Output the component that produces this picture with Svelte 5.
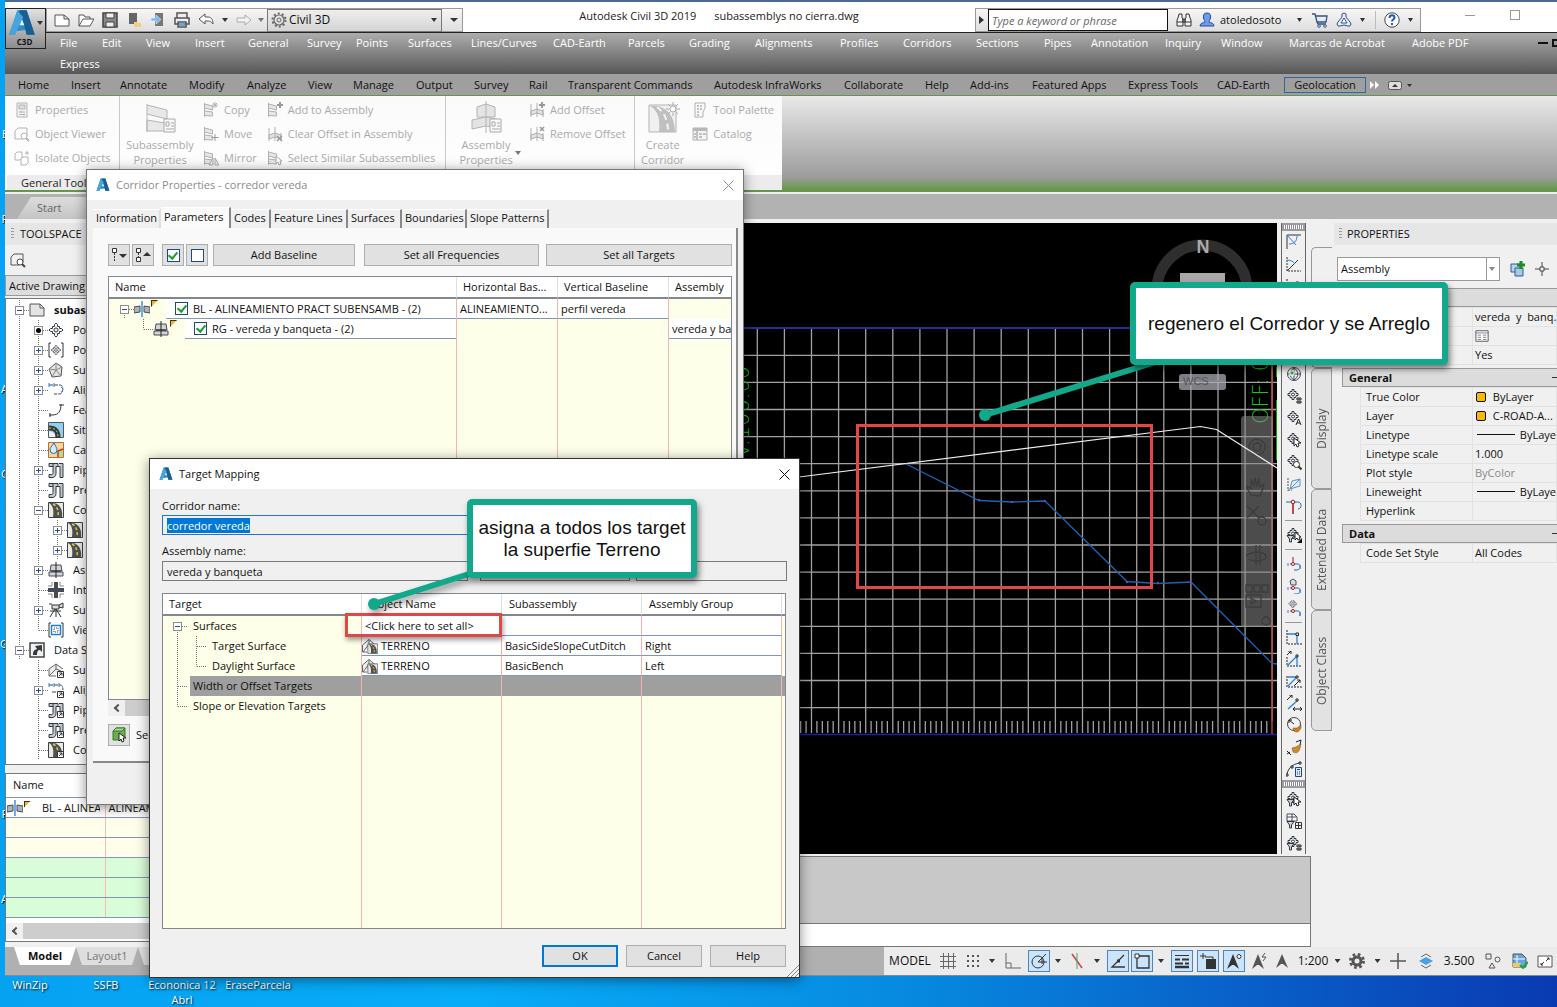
<script lang="ts">
  import { onMount } from 'svelte'

  type Guide = 'line' | 'tee' | 'end' | 'plus' | 'minus' | 'dot' | 'top' | 'blank'

  interface TreeRow {
    guides: Guide[]
    icon: string
    label?: string
    bold?: boolean
  }

  interface StatusItem {
    w: number
    icon?: string
    text?: string
    drop?: boolean
    on?: boolean
    title?: string
  }

  let corridorInput: HTMLInputElement

  onMount(() => {
    corridorInput.focus()
    corridorInput.select()
  })

  const menus: [string, number][] = [
    ['File', 42], ['Edit', 44], ['View', 49], ['Insert', 53], ['General', 59], ['Survey', 49],
    ['Points', 52], ['Surfaces', 63], ['Lines/Curves', 82], ['CAD-Earth', 75], ['Parcels', 61],
    ['Grading', 66], ['Alignments', 85], ['Profiles', 63], ['Corridors', 73], ['Sections', 68],
    ['Pipes', 47], ['Annotation', 74], ['Inquiry', 56], ['Window', 68],
    ['Marcas de Acrobat', 123], ['Adobe PDF', 90],
  ]

  const ribbonTabs: [string, number][] = [
    ['Home', 53], ['Insert', 49], ['Annotate', 69], ['Modify', 58], ['Analyze', 61], ['View', 45],
    ['Manage', 63], ['Output', 58], ['Survey', 55], ['Rail', 39], ['Transparent Commands', 146],
    ['Autodesk InfraWorks', 130], ['Collaborate', 81], ['Help', 45], ['Add-ins', 62],
    ['Featured Apps', 96], ['Express Tools', 89], ['CAD-Earth', 67],
  ]

  const point = '<path d="M6.5 4.5v-2L8 1l1.5 1.5v2h2v2h2L15 8l-1.5 1.5h-2v2h-2v2L8 15l-1.5-1.5v-2h-2v-2h-2L1 8l1.5-1.5h2v-2z" fill="#f4f4f4" stroke="#333944"/><circle cx="8" cy="8" r="2" fill="none" stroke="#333944"/>'
  const smallPoint = '<path d="M6 3.5v-2h2v2h2v2h2v2h-2v2h-2v2h-2v-2h-2v-2h-2v-2h2v-2z" fill="#f6f6f6" stroke="#333944"/><circle cx="7" cy="6.5" r="1.5" fill="none" stroke="#333944"/>'
  const road = '<path d="M.5.5h15v15H.5z" fill="#eceae0" stroke="#39424c"/><path d="M1 1c4 2 5 7 4 14h9C15 8 12 2 6 1z" fill="#4d5156"/><path d="M5 2c4 2 6 7 5 13" fill="none" stroke="#f0c830" stroke-width="1.5" stroke-dasharray="3 2"/>'
  const pipe = '<path d="M1 1.5h9v3H8v7c0 3-2 4-4 4H1v-3h2c1 0 2 0 2-2v-6H1zM11 1.5h4v14h-3v-11" fill="#c2c7cd" stroke="#32383f"/><path d="M5 1v4M10 4.5h2" stroke="#32383f"/>'
  const ref = '<path d="M9.5 9.5h6v6h-6z" fill="#fff" stroke="#333"/><path d="M11 14l3-3M11.5 11H14v2.5" fill="none" stroke="#333"/>'
  const align = '<path d="M1 3h11c4 0 4 9-1 9H6" fill="none" stroke="#3b4652" stroke-dasharray="4 1"/><path d="M1 1v4M6 1v4M13 5l2 2M13 10l2-1" stroke="#2b80d8"/>'
  const align2 = '<path d="M4 8h2m3 0h3c3 0 3 6-1 6H8" fill="none" stroke="#2468b0"/><path d="M14 9v4M2 7v3" stroke="#2b80d8"/><circle cx="7" cy="8" r="1.5" fill="#fff" stroke="#b01010"/>'
  const ribbonSub = '<path d="M1.5 1v14M1.5 2l8 2v4l-8-2M1.5 9l8 1v4l-8-.5" fill="#e6e6e6" stroke="#b0b0b0"/>'
  const offset = '<path d="M2 2v13M8 1v14M14 7v8M2 9l6-2 6 2v4l-6-2-6 2z" fill="#e2e2e2" stroke="#b0b0b0"/>'
  const filter = '<path d="M1 8.5h7L5.5 12v3h-2v-3z" fill="#ccd1d7" stroke="#333944"/>'
  const hash = '<path d="M10 11h6M10 14h6M12 9v7M14 9v7" stroke="#222"/>'
  const cursor = '<path d="M8 6v8l2-2 1 3 2-1-1-3h3z" fill="#fff" stroke="#222"/>'
  const ghostCursor = '<path d="M9 6v8l2-2 1 3 2-1-1-3h2z" fill="#fff" stroke="#a8a8a8"/>'

  const icons: Record<string, string> = {
    newFile: '<path d="M1 3h9l5 4v7H1zM10 3v4h5" fill="#fff" stroke="#555"/>',
    open: '<path d="M1 14V3h5l1 2h5v2M1 14l4-7h11l-4 7z" fill="#fff" stroke="#555"/>',
    save: '<path d="M1 1h14v14H1z" fill="#888" stroke="#444" stroke-width="1.5"/><path d="M4 1h8v5H4zM4 10h8v5H4z" fill="#eee" stroke="#444"/>',
    sheet: '<path d="M3 1h8v11H3z" fill="#666"/><path d="M8 10h4l1 1h2v4H8z" fill="#f5cf80"/>',
    export: '<path d="M5 1h8v13H5z" fill="#777"/><path d="M1 6h5V3l5 4.5L6 12V9H1z" fill="#78b9ef" stroke="#fff" stroke-width=".5"/>',
    print: '<path d="M3 1h10v5H3zM1 6h14v6H1zM4 10h8v5H4z" fill="#eee" stroke="#555" stroke-width="1.5"/><path d="M5 11h6v3H5z" fill="#62a7df"/>',
    undo: '<path d="M1 7l6-5v3h3c4 0 5 4 5 7-2-3-4-3-5-3H7v3z" fill="#fff" stroke="#555"/>',
    redo: '<path d="M15 8L9 3v3H1v4h8v3z" fill="#f4f4f4" stroke="#aaa"/>',
    gear: '<circle cx="8" cy="8" r="5" fill="none" stroke="#666" stroke-width="1.2"/><circle cx="8" cy="8" r="2" fill="none" stroke="#666"/><circle cx="8" cy="8" r="6.5" fill="none" stroke="#666" stroke-width="2" stroke-dasharray="2 2.08"/>',
    binoculars: '<path d="M2 6l1-4h3v4l1 1v7H1V8zM14 6l-1-4h-3v4L9 7v7h6V8zM7 7h2v3H7zM1 10h6M9 10h6" fill="#f4f4f4" stroke="#333"/>',
    user: '<path d="M8 1c-3 0-4 2-3.5 5C5 8 6 9 6 10c-2 1-5 1-5 4h14c0-3-3-3-5-4 0-1 1-2 1.5-4C12 3 11 1 8 1z" fill="#6c9cf0" stroke="#2a4a90"/>',
    cart: '<path d="M0 2h3l2 8h9l1-6H4M5 10l1 2h8" fill="none" stroke="#34518a" stroke-width="1.3"/><circle cx="7" cy="14" r="1.3" fill="#fff" stroke="#34518a"/><circle cx="13" cy="14" r="1.3" fill="#fff" stroke="#34518a"/>',
    app360: '<path d="M6 2l2-1 2 1v3l4 5 1 2-1 2h-2l-4-1-4 1H2l-1-2 1-2 4-5z" fill="#e8edf5" stroke="#34518a"/><path d="M8 6l3 5H5z" fill="#fff" stroke="#34518a"/>',
    help: '<circle cx="8" cy="8" r="7.2" fill="#fff" stroke="#444"/><path d="M5.5 6c0-4 5-3.5 5-.5 0 2-2.5 2-2.5 4M8 11v2" fill="none" stroke="#2558b0" stroke-width="2"/>',
    props: '<path d="M3 1h10v14H3z" fill="#f4f4f4" stroke="#b4b4b4"/><path d="M5 3h6v4H5z" fill="#ddd" stroke="#b4b4b4"/><path d="M5 10h6M5 12.5h6M7 9v2M10 11.5v2" stroke="#b4b4b4"/>',
    viewer: '<path d="M1 5l3-3h9v8M1 5v8h8" fill="none" stroke="#b4b4b4"/><circle cx="10" cy="10" r="3" fill="#fff" stroke="#b4b4b4"/><path d="M12 12l3 3" stroke="#b4b4b4" stroke-width="2"/>',
    viewerDark: '<path d="M1 5l3-3h9v8M1 5v8h8" fill="none" stroke="#555"/><circle cx="10" cy="10" r="3" fill="#fff" stroke="#444"/><path d="M12 12l3 3" stroke="#444" stroke-width="2"/>',
    isolate: '<path d="M1 4l2-2h5v6l-2 2H1zM7 9l2-2h5v6l-2 2H7zM13 1v4M11 3h4" fill="none" stroke="#b4b4b4"/>',
    copy: ribbonSub + '<path d="M12 0v6M9 3h6M10 1l4 4M14 1l-4 4" stroke="#b4b4b4"/>',
    move: ribbonSub + '<path d="M12 8v7M8.5 11.5h7" stroke="#999"/>',
    mirror: ribbonSub + '<path d="M10 8v7H6zM12 8v7h4z" fill="#eee" stroke="#aaa"/>',
    addAsm: ribbonSub + '<path d="M13 0v6M10 3h6" stroke="#999" stroke-width="2"/>',
    clearAsm: offset + '<path d="M10 10l5 5M15 10l-5 5" stroke="#999" stroke-width="1.5"/>',
    similar: ribbonSub + ghostCursor,
    addOffset: offset + '<path d="M13 0v6M10 3h6" stroke="#999" stroke-width="2"/>',
    removeOffset: offset + '<path d="M11 1l4 4M15 1l-4 4" stroke="#999" stroke-width="1.5"/>',
    palette: '<path d="M3 1h10v5l-2 4v5H3z" fill="#f8f8f8" stroke="#b0b0b0"/><path d="M5 4h2M5 7h2M5 10h2M8 4h2M8 7h2M5 13h2" stroke="#b0b0b0" stroke-width="1.5"/>',
    catalog: '<path d="M1 2h14v12H1z" fill="#f4f4f4" stroke="#b0b0b0"/><path d="M1 2h14v3H1z" fill="#b8b8b8"/><path d="M5 5v9M7 8h3M7 11h3M11 8h3M2 8h2M2 11h2" stroke="#b0b0b0" stroke-width="1.5"/>',
    doc: '<path d="M1 2h10l4 4v8H1z" fill="#e4e4e4" stroke="#555"/><path d="M11 2v4h4z" fill="#fff" stroke="#555"/>',
    point,
    pointGroup: '<path d="M3 1H1v14h2M13 1h2v14h-2" fill="none" stroke="#333"/><g transform="translate(2.4 2.4) scale(.7)">' + point + '</g>',
    surface: '<path d="M8 1l6 4-1 9-9 1-3-8z" fill="#e3e3e3" stroke="#555"/><path d="M8 1v7l6-3M8 8l5 6M8 8l-4 7M8 8L1 7" fill="none" stroke="#888"/>',
    surfaceRef: '<path d="M1 14V7l7-5 7 5M1 14h7M8 2v5L1 14M8 7l5 2" fill="#eee" stroke="#666"/>' + ref,
    align,
    alignRef: '<path d="M1 3h11c2 0 3 2 3 5M4 10h4" fill="none" stroke="#3b4652" stroke-dasharray="4 1"/><path d="M1 1v4M6 1v4M11 1v4" stroke="#2b80d8"/>' + ref,
    feature: '<path d="M1 13h3c7 0 9-4 9-11M11 3h5M2 11v4" fill="none" stroke="#333"/>',
    site: '<path d="M.5.5h15v15H.5z" fill="#8fd0f5" stroke="#555"/><path d="M1 9l5 2 3 4H1z" fill="#eef"/><path d="M1 6c7 0 9 3 9 10" fill="none" stroke="#333a40" stroke-width="5"/><path d="M1 6c7 0 9 3 9 10" fill="none" stroke="#f0c830" stroke-dasharray="2 2"/>',
    catchment: '<path d="M.5.5h15v15H.5z" fill="#f6d8a0" stroke="#b07030"/><path d="M8 9c3-2 5 0 7-3v9H9z" fill="#b5dc90"/><path d="M10 9l5-2M10 9v6" stroke="#d83020" stroke-width="1.5"/><path d="M6 1c-3 4-4 5-4 7a3.5 3.5 0 007 0C9 6 8 5 6 1z" fill="#d5ecff" stroke="#2468b0"/>',
    pipe,
    pipeRef: pipe + ref,
    road,
    roadRef: road + ref,
    assembly: '<path d="M3 3h10l1 6H2zM1 10h14v4H1z" fill="#d2d4d8" stroke="#444a55"/><path d="M8 0v16M3 9h10" stroke="#222"/>',
    intersection: '<path d="M6 0v6H0v4h6v6h4v-6h6V6h-6V0z" fill="#454b52"/><path d="M4 0v4H0M12 0v4h4M4 16v-4H0M12 16v-4h4" fill="none" stroke="#888"/>',
    survey: '<path d="M4 3h7v4H4zM1 2h3M11 3l4-2v5l-4-1M7 7L2 15M8 7v8M8 7l5 8M2 9h11" fill="#ddd" stroke="#333"/>',
    viewFrame: '<path d="M3 1H1v14h2M13 1h2v14h-2" fill="none" stroke="#333"/><path d="M3.5 3.5h9v9h-9z" fill="#fff" stroke="#1c80e0" stroke-width="1.5"/><path d="M6 6h4v4H6z" fill="none" stroke="#444" stroke-dasharray="1 1"/>',
    shortcut: '<path d="M1 1h14v14H1z" fill="#f2f2f2" stroke="#444" stroke-width="1.5"/><path d="M4 13c0-4 1-5 4-6L6 4l7-1v7l-2-2c-2 0-3 1-3 5z" fill="#333b45"/>',
    baseline: '<path d="M0 6l6-1v6l-6 1zM10 5l6 1v6l-6-1z" fill="#aeb2b8" stroke="#444a55"/><path d="M8 0v16" stroke="#1c80e0" stroke-width="1.3"/>',
    target: '<path d="M.5 14V7L7 1.5 13.5 7M.5 14H5M7 1.5V6M1 14l6-8" fill="#eee" stroke="#666"/><g transform="translate(5.5 5.5) scale(.66)">' + road + '</g>',
    select: '<path d="M2 4l3-3h9v9l-3 3H2z" fill="#6cae4e" stroke="#37782a"/><path d="M2 4l3-3h9l-3 3z" fill="#b0dc98" stroke="#37782a"/>' + cursor,
    expand: '<path d="M1.5 1.5h4v4h-4z" fill="#fff" stroke="#333"/><path d="M3.5 6v9" stroke="#333" stroke-dasharray="2 1"/><path d="M8 7h8l-4 4z" fill="#333"/>',
    collapse: '<path d="M1.5 1.5h4v4h-4zM1.5 10.5h4v4h-4z" fill="#fff" stroke="#333"/><path d="M3.5 6v4" stroke="#333" stroke-dasharray="2 1"/><path d="M8 9h8l-4-4z" fill="#333"/>',
    tAngle: '<path d="M1 15V1h14" fill="none" stroke="#333"/><path d="M1 1l9 10M11 2c0 5-3 8-8 8" fill="none" stroke="#2b80d8"/>',
    tBearing: '<path d="M1 1v14h14" fill="none" stroke="#333" stroke-dasharray="2 1"/><path d="M1 15L12 4" stroke="#333"/><path d="M1 4c4 0 7 2 8 4" fill="none" stroke="#2b80d8"/>',
    tGlobe: '<circle cx="8" cy="8" r="6.5" fill="#eee" stroke="#444a55"/><path d="M8 1.5v13M2 8h12M8 2c5 3 5 9 0 12M8 2c-5 3-5 9 0 12" fill="none" stroke="#444a55"/><path d="M4 5h4v4H4z" fill="#2fae38" stroke="#fff"/>',
    tHash: smallPoint + hash,
    tA: smallPoint + '<path d="M10 15l2.5-6 2.5 6M11 13h3" fill="none" stroke="#222"/>',
    tPick: smallPoint + cursor,
    tZoom: smallPoint + '<circle cx="10.5" cy="10.5" r="3" fill="#fff" stroke="#333"/><path d="M12.5 12.5l3 3" stroke="#333" stroke-width="2"/>',
    tGrade: '<path d="M2 2v13M2 14h4" stroke="#555" stroke-dasharray="2 1"/><path d="M4 13l2-8 8-2v7zM4 13l10-10" fill="#dcecfb" stroke="#6a8fb5"/>',
    tStation: '<path d="M0 4h5M9 4h3c4 0 4 7 0 7" fill="none" stroke="#2468b0"/><path d="M7 5v11" stroke="#b01010" stroke-width="1.5"/><circle cx="7" cy="4" r="1.8" fill="#fff" stroke="#b01010"/>',
    tFilterPt: smallPoint + filter + '<path d="M9 5v8l2-2 1 2 2-1-1-2h2z" fill="#fff" stroke="#222"/><path d="M16 11v5h-5z" fill="#111"/>',
    tAlign: '<path d="M7 1v5" stroke="#b01010"/>' + align2,
    tAlignSurf: '<path d="M4 3l3-2 3 2v4H5z" fill="#ddd" stroke="#444a55"/><g transform="translate(0 2)">' + align2 + '</g>',
    tAlignPt: '<g transform="translate(2 -1) scale(.6)">' + point + '</g><g transform="translate(0 3)">' + align2 + '</g>',
    tRect: '<path d="M1 1v14h15" fill="none" stroke="#222" stroke-dasharray="2 1"/><path d="M1 5h10v10" fill="none" stroke="#2b80d8" stroke-width="1.3"/><path d="M10 4h2.5v2.5H10z" fill="#fff" stroke="#222"/>',
    tTri: '<path d="M1 6v9h15" fill="none" stroke="#222" stroke-dasharray="2 1"/><path d="M2 14l9-9v10" fill="none" stroke="#2b80d8" stroke-width="1.3"/><path d="M1 4l4-4M2 0h3v3" fill="none" stroke="#222"/><path d="M10 4h2v2h-2z" fill="#fff" stroke="#222"/>',
    tTri2: '<path d="M1 3v11h15" fill="none" stroke="#222" stroke-dasharray="2 1"/><path d="M2 13l9-9H2" fill="none" stroke="#2b80d8" stroke-width="1.3"/><path d="M8 13l6-6M11 7h3v3" fill="none" stroke="#222"/><path d="M10 3h2v2h-2z" fill="#fff" stroke="#222"/>',
    tPar: '<path d="M1 5l5-5M3 0h3v3M7 14h9M9 12l-2 2 2 2M14 12l2 2-2 2" fill="none" stroke="#222"/><path d="M2 14L12 5" stroke="#2b80d8" stroke-width="1.3"/><path d="M10 4h2v2h-2z" fill="#fff" stroke="#222"/>',
    tBrush: '<circle cx="8" cy="7" r="6.5" fill="#f2f2f2" stroke="#444"/><path d="M8 7L3 3M3 6V3h3" fill="none" stroke="#222"/><path d="M15 8l-4 3-4 0 1 3c3 2 5 1 7-3z" fill="#c8812c" stroke="#7a4a10" stroke-width=".5"/>',
    tBrush2: '<path d="M1 12l4 4M1 15l3-2M10 3l5-2-1 5" fill="none" stroke="#222"/><path d="M15 5l-5 3-4 1 1 4c4 2 6 0 7-4z" fill="#d08a2c" stroke="#7a4a10" stroke-width=".5"/>',
    tCalc: '<path d="M1 15C1 8 6 3 14 2" fill="none" stroke="#333"/><path d="M0 13h2v2H0zM5 5h2v2H5zM13 1h2v2h-2z" fill="#fff" stroke="#222"/><path d="M9.5 6.5h6v9h-6z" fill="#dce8f5" stroke="#1c4a80"/><path d="M11 8.5h3M11 11h1M13 11h1M11 13h1M13 13h1" stroke="#1c4a80"/>',
    tSelPt: smallPoint + filter + cursor,
    tSheet: '<path d="M1 1h7l3 3v4H1z" fill="#fff" stroke="#444a55"/><path d="M6 1v7M1 4h9" stroke="#444a55"/>' + filter + '<path d="M9.5 9.5h6v6h-6zM9 12.5h7M12.5 9v7" fill="none" stroke="#333"/>',
    tSelHash: smallPoint + filter + hash,
    quick: '<path d="M2 3h9v8H2z" fill="#b8d2ec" stroke="#2c5c94"/><path d="M6 7h8v8H6z" fill="#a8c8e8" stroke="#2c5c94"/><path d="M12 0v8M8 4h8" stroke="#1e8a28" stroke-width="3"/>',
    pick: '<path d="M8 1v5M8 10v5M1 8h5M10 8h5M6 6h4v4H6z" fill="none" stroke="#444"/>',
    table: '<path d="M1 2h14v12H1z" fill="#fff" stroke="#444a55"/><path d="M1 4.5h14M3 7h4M9 7h4M3 9.5h4M9 9.5h4M3 12h4M9 12h4" stroke="#777"/>',
    sGrid: '<path d="M3.5 0v16M8.5 0v16M13.5 0v16M0 3.5h16M0 8.5h16M0 13.5h16" stroke="#666"/>',
    sSnap: '<path d="M2 3h14M2 8h14M2 13h14" stroke="#555" stroke-width="2" stroke-dasharray="2 3"/>',
    sOrtho: '<path d="M1 0v15h15M1 10h5v5" fill="none" stroke="#666"/>',
    sPolar: '<circle cx="7" cy="9" r="6" fill="none" stroke="#333"/><path d="M15 1L7 9h9M11 5v6" fill="none" stroke="#333"/>',
    sIso: '<path d="M3 1l10 14" stroke="#d04040" stroke-width="1.5"/><path d="M8 0v16" stroke="#3fa860"/>',
    sTrack: '<path d="M14 2L2 14h13" fill="none" stroke="#333" stroke-width="1.3"/><path d="M7 8h3" stroke="#333" stroke-width="3"/>',
    sOsnap: '<path d="M5 3h10v12H3V5" fill="none" stroke="#333" stroke-width="1.3"/><path d="M1 1h4v4H1z" fill="#fff" stroke="#333"/>',
    sLwt: '<path d="M1 2.5h14" stroke="#333"/><path d="M1 6.5h5M8 6.5h7M1 10.5h8M11 10.5h4" stroke="#333" stroke-width="2"/><path d="M1 14h14" stroke="#333" stroke-width="2.5"/>',
    sCycle: '<path d="M6 6h10v10H6z" fill="#333"/><path d="M3 0v6M0 3h6M5 4h8v3" fill="none" stroke="#333"/>',
    sAnno: '<path d="M7 1l6 15-5-4H6l-5 4z" fill="#333"/><circle cx="13" cy="3.5" r="2" fill="#fff" stroke="#333"/>',
    sAuto: '<path d="M7 1l6 15-5-4H6l-5 4z" fill="#555"/><path d="M14 0l-3 4h4l-3 4" fill="none" stroke="#555"/>',
    sScale: '<path d="M8 1l6 14-5-4H7l-5 4z" fill="#555"/>',
    sGear: '<circle cx="8" cy="8" r="4" fill="none" stroke="#555" stroke-width="3"/><circle cx="8" cy="8" r="6.5" fill="none" stroke="#555" stroke-width="3" stroke-dasharray="2.6 2.505"/>',
    sPlus: '<path d="M8 0v16M0 8h16" stroke="#555" stroke-width="1.5"/>',
    sElev: '<path d="M3 4l5-3 5 3M3 12l5 3 5-3" fill="none" stroke="#666"/><path d="M8 4l7 4-7 4-7-4z" fill="#4d9fe0"/>',
    sIsolate: '<path d="M1 1h5v5H1zM7 10l3 5H4z" fill="none" stroke="#555"/><circle cx="12.5" cy="6.5" r="2.5" fill="none" stroke="#555"/>',
    sHardware: '<path d="M1 1h9l4 4v9H1z" fill="#62a7df" stroke="#555"/><path d="M5 2v11M1 6h12" stroke="#fff"/><path d="M1 10h8v4H1z" fill="#f0c860"/><path d="M8 12l3 3 5-6" fill="none" stroke="#22a040" stroke-width="2"/>',
    sClean: '<path d="M1 3h14v11H1z" fill="#fff" stroke="#555"/><path d="M9 8l3-3M10 5h2v2M7 9l-3 3M6 12H4v-2" fill="none" stroke="#333"/>',
  }

  const tree: TreeRow[] = [
    { guides: ['minus'], icon: 'doc', label: 'subassemblys', bold: true },
    { guides: ['line', 'dot'], icon: 'point', label: 'Points' },
    { guides: ['line', 'plus'], icon: 'pointGroup', label: 'Point Groups' },
    { guides: ['line', 'plus'], icon: 'surface', label: 'Surfaces' },
    { guides: ['line', 'plus'], icon: 'align', label: 'Alignments' },
    { guides: ['line', 'tee'], icon: 'feature', label: 'Feature Lines' },
    { guides: ['line', 'tee'], icon: 'site', label: 'Sites' },
    { guides: ['line', 'tee'], icon: 'catchment', label: 'Catchments' },
    { guides: ['line', 'plus'], icon: 'pipe', label: 'Pipe Networks' },
    { guides: ['line', 'tee'], icon: 'pipe', label: 'Pressure' },
    { guides: ['line', 'minus'], icon: 'road', label: 'Corridors' },
    { guides: ['line', 'line', 'plus'], icon: 'road' },
    { guides: ['line', 'line', 'plus'], icon: 'road' },
    { guides: ['line', 'plus'], icon: 'assembly', label: 'Assemblies' },
    { guides: ['line', 'tee'], icon: 'intersection', label: 'Intersections' },
    { guides: ['line', 'plus'], icon: 'survey', label: 'Survey' },
    { guides: ['line', 'end'], icon: 'viewFrame', label: 'View Frame' },
    { guides: ['minus'], icon: 'shortcut', label: 'Data Shortcuts' },
    { guides: ['blank', 'tee'], icon: 'surfaceRef', label: 'Surfaces' },
    { guides: ['blank', 'plus'], icon: 'alignRef', label: 'Alignments' },
    { guides: ['blank', 'tee'], icon: 'pipeRef', label: 'Pipe Networks' },
    { guides: ['blank', 'tee'], icon: 'pipeRef', label: 'Pressure' },
    { guides: ['blank', 'tee'], icon: 'roadRef', label: 'Corridors' },
  ]

  const tools = [
    'tAngle', 'tBearing', 'tRect', 'tTri', 'tPar', 'tGrade', 'tGlobe', 'tHash', 'tA', 'tPick',
    'tZoom', 'tGrade', 'tStation', '-', 'tFilterPt', '-', 'tAlign', 'tAlignSurf', 'tAlignPt', '-',
    'tRect', 'tTri', 'tTri2', 'tPar', 'tBrush', 'tBrush2', 'tCalc',
  ]

  const status: StatusItem[] = [
    { w: 52, text: 'MODEL' },
    { w: 24, icon: 'sGrid', title: 'Grid' },
    { w: 25, icon: 'sSnap', title: 'Snap' },
    { w: 14, drop: true, title: 'Snap options' },
    { w: 28, icon: 'sOrtho', title: 'Ortho' },
    { w: 24, icon: 'sPolar', on: true, title: 'Polar tracking' },
    { w: 14, drop: true, title: 'Polar options' },
    { w: 24, icon: 'sIso', title: 'Isodraft' },
    { w: 16, drop: true, title: 'Isodraft options' },
    { w: 25, icon: 'sTrack', on: true, title: 'Object snap tracking' },
    { w: 24, icon: 'sOsnap', on: true, title: 'Object snap' },
    { w: 14, drop: true, title: 'Object snap options' },
    { w: 27, icon: 'sLwt', on: true, title: 'Lineweight' },
    { w: 25, icon: 'sCycle', on: true, title: 'Selection cycling' },
    { w: 27, icon: 'sAnno', on: true, title: 'Annotation visibility' },
    { w: 23, icon: 'sAuto', title: 'Auto scale' },
    { w: 24, icon: 'sScale', title: 'Annotation scale' },
    { w: 38, text: '1:200' },
    { w: 11, drop: true, title: 'Scale list' },
    { w: 28, icon: 'sGear', title: 'Workspace' },
    { w: 13, drop: true, title: 'Workspace options' },
    { w: 28, icon: 'sPlus', title: 'Annotation monitor' },
    { w: 28, icon: 'sElev', title: 'Elevation' },
    { w: 38, text: '3.500' },
    { w: 29, icon: 'sIsolate', title: 'Isolate objects' },
    { w: 25, icon: 'sHardware', title: 'Hardware acceleration' },
    { w: 25, icon: 'sClean', title: 'Clean screen' },
  ]

  const general = [
    { name: 'True Color', value: 'ByLayer', kind: 'swatch' },
    { name: 'Layer', value: 'C-ROAD-A...', kind: 'swatch' },
    { name: 'Linetype', value: 'ByLayer', kind: 'stroke' },
    { name: 'Linetype scale', value: '1.000', kind: '' },
    { name: 'Plot style', value: 'ByColor', kind: 'muted' },
    { name: 'Lineweight', value: 'ByLayer', kind: 'stroke' },
    { name: 'Hyperlink', value: '', kind: '' },
  ]

  // profile grid spacing and origin in drawing pixels
  const STEP = 27.1
  const cols = Array.from({ length: 20 }, (_, i) => 757.3 + i * STEP)
  const rows = Array.from({ length: 14 }, (_, i) => 355.3 + i * STEP)
  const ticks = cols.flatMap((x) => [0, 1, 2, 3, 4].map((n) => x + n * 5.42)).filter((x) => x < 1270)
</script>

{#snippet icon(name: string, size = 16)}
  <svg class="icon" width={size} height={size} viewBox="0 0 16 16" aria-hidden="true">{@html icons[name]}</svg>
{/snippet}

{#snippet guide(kind: Guide)}
  <svg class="guide" width="19" height="20" viewBox="0 0 19 20" aria-hidden="true">
    {#if kind !== 'blank'}
      <g stroke="#777" stroke-dasharray="1 1" fill="none">
        {#if kind === 'end'}
          <path d="M9.5 0v10.5" />
        {:else if kind === 'top'}
          <path d="M9.5 10v10" />
        {:else}
          <path d="M9.5 0v20" />
        {/if}
        {#if kind !== 'line'}<path d="M10 10.5h9" />{/if}
      </g>
    {/if}
    {#if kind === 'plus' || kind === 'minus' || kind === 'top' || kind === 'dot'}
      <rect x="5.5" y="6.5" width="8" height="8" fill="#fff" stroke="#8c8c8c" />
    {/if}
    {#if kind === 'dot'}
      <circle cx="9.5" cy="10.5" r="2.5" />
    {:else if kind === 'plus'}
      <path d="M7 10.5h5M9.5 8v5" stroke="#2c4ca0" />
    {:else if kind === 'minus' || kind === 'top'}
      <path d="M7 10.5h5" stroke="#2c4ca0" />
    {/if}
  </svg>
{/snippet}

{#snippet logo(size: number)}
  <svg class="icon" width={size} height={size} viewBox="0 0 24 24" aria-hidden="true">
    <path d="M1 22L8 1h8l7 21h-7l-1-4-8 1-1 3z" fill="#2f8cc8" />
    <path d="M10 1h6l7 21h-7L12 7 8 17l-7 5z" fill="#1a5f94" />
    <path d="M8 1L1 22h5l7-15z" fill="#48a5dc" />
    <path d="M12 9l-2 5h4z" fill="#e8f1f8" />
  </svg>
{/snippet}

{#snippet small(name: string, label: string)}
  <button class="small" type="button">{@render icon(name)}{label}</button>
{/snippet}

{#snippet close()}
  <button type="button" aria-label="Close">
    <svg width="11" height="11" viewBox="0 0 11 11"><path d="M.5.5l10 10M10.5.5l-10 10" stroke="currentColor" /></svg>
  </button>
{/snippet}

<div class="desktop">
  <div class="edge-labels" aria-hidden="true">
    {#each ['E', 'P', '', 'A', 'C', '', 'G', '', 'P', 'A'] as letter}
      <span>{letter}</span>
    {/each}
  </div>

  <div class="app">
    <button class="app-button" type="button" aria-label="Application menu">
      {@render logo(28)}<i class="caret"></i><b>C3D</b>
    </button>

    <header class="titlebar">
      <div class="quick">
        {#each ['newFile', 'open', 'save', 'sheet', 'export', 'print', 'undo'] as name}
          <button type="button" aria-label={name}>{@render icon(name)}</button>
        {/each}
        <i class="caret"></i>
        <button type="button" aria-label="redo">{@render icon('redo')}</button>
        <i class="caret pale"></i>
        <label class="workspace">
          {@render icon('gear')}
          <select aria-label="Workspace"><option>Civil 3D</option></select>
          <i class="caret"></i>
        </label>
        <i class="caret more"></i>
      </div>
      <div class="window-title"><span>Autodesk Civil 3D 2019</span><span>subassemblys no cierra.dwg</span></div>
      <div class="info">
        <i class="play"></i>
        <input type="search" placeholder="Type a keyword or phrase" aria-label="Search" />
        <button type="button" aria-label="Search">{@render icon('binoculars')}</button>
        <button class="account" type="button">{@render icon('user')}<span>atoledosoto</span><i class="caret"></i></button>
        <button type="button" aria-label="Store">{@render icon('cart')}</button>
        <button type="button" aria-label="App">{@render icon('app360')}</button>
        <i class="caret"></i>
        <i class="bar"></i>
        <button type="button" aria-label="Help">{@render icon('help')}</button>
        <i class="caret"></i>
      </div>
      <div class="window-buttons"><i class="min"></i><i class="max"></i></div>
    </header>

    <nav class="menubar">
      {#each menus as [label, w]}
        <a href="#{label}" style:width="{w}px">{label}</a>
      {/each}
      <span class="mdi"><i></i><i></i></span>
      <a href="#Express" class="express">Express</a>
    </nav>

    <nav class="tabs">
      {#each ribbonTabs as [label, w]}
        <a href="#{label}" style:width="{w}px">{label}</a>
      {/each}
      <a href="#Geolocation" class="geo">Geolocation</a>
      <svg width="46" height="12" viewBox="0 0 46 12" aria-hidden="true">
        <path d="M4 2l4 4-4 4zM9 2l4 4-4 4z" fill="#fff" />
        <rect x="22.5" y="2.5" width="13" height="8" rx="2" fill="#ddd" stroke="#555" />
        <path d="M26 8l3-3 3 3zM41 5h5l-2.5 3z" fill="#333" />
      </svg>
    </nav>

    <div class="ribbon">
      <div class="panels">
        <div class="panel general">
          <div class="stack">
            {@render small('props', 'Properties')}
            {@render small('viewer', 'Object Viewer')}
            {@render small('isolate', 'Isolate Objects')}
          </div>
        </div>
        <div class="panel sub">
          <button class="large" type="button">
            <svg width="36" height="34" viewBox="0 0 36 34" aria-hidden="true">
              <path d="M5 3v28M5 4l20 5v9L5 13M5 19l18 3v8H5z" fill="#e8e8e8" stroke="#b4b4b4" />
              <path d="M22 18h11v13H22zM24 21h3v4h-3zM29 22h3M29 25h3M24 28h8" fill="#f8f8f8" stroke="#aaa" />
            </svg>
            Subassembly<br />Properties
          </button>
          <div class="stack">
            {@render small('copy', 'Copy')}
            {@render small('move', 'Move')}
            {@render small('mirror', 'Mirror')}
          </div>
          <div class="stack">
            {@render small('addAsm', 'Add to Assembly')}
            {@render small('clearAsm', 'Clear Offset in Assembly')}
            {@render small('similar', 'Select Similar Subassemblies')}
          </div>
        </div>
        <div class="panel asm">
          <button class="large" type="button">
            <svg width="36" height="34" viewBox="0 0 36 34" aria-hidden="true">
              <path d="M9 6l9-3 9 3v10H9zM4 19l14-3 14 3v9l-14-3-14 3zM18 0v32" fill="#e4e4e4" stroke="#b4b4b4" />
              <path d="M22 18h11v13H22zM24 21h3v4h-3zM29 22h3M29 25h3M24 28h8" fill="#f8f8f8" stroke="#aaa" />
            </svg>
            Assembly<br />Properties
          </button>
          <i class="caret"></i>
          <div class="stack">
            {@render small('addOffset', 'Add Offset')}
            {@render small('removeOffset', 'Remove Offset')}
          </div>
        </div>
        <div class="panel create">
          <button class="large" type="button">
            <svg width="36" height="34" viewBox="0 0 36 34" aria-hidden="true">
              <path d="M4 4h27v27H4z" fill="#f0f0f0" stroke="#b4b4b4" />
              <path d="M5 5c9 5 10 14 9 26h16C30 18 24 8 13 5z" fill="#c0c0c0" />
              <path d="M12 6c8 6 11 14 11 25" fill="none" stroke="#f4f4f4" stroke-width="2" stroke-dasharray="6 4" />
              <circle cx="28" cy="8" r="3" fill="#fff" stroke="#aaa" />
              <path d="M28 1v3M28 12v3M21 8h3M32 8h3M23 3l2 2M31 11l2 2M33 3l-2 2M25 11l-2 2" stroke="#aaa" />
            </svg>
            Create<br />Corridor
          </button>
          <div class="stack">
            {@render small('palette', 'Tool Palette')}
            {@render small('catalog', 'Catalog')}
          </div>
        </div>
        <div class="panel-title">General Tools</div>
      </div>
    </div>

    <div class="file-tabs"><a href="#start">Start</a></div>

    <main>
      <aside class="toolspace">
        <h2><i class="grip"></i>TOOLSPACE</h2>
        <div class="tool-row">{@render icon('viewerDark')}</div>
        <select class="view" aria-label="View"><option>Active Drawing View</option></select>
        <div class="tree">
          {#each tree as row}
            <div class="tree-row" class:bold={row.bold}>
              {#each row.guides as g}{@render guide(g)}{/each}
              {@render icon(row.icon)}
              {#if row.label}<span>{row.label}</span>{/if}
            </div>
          {/each}
        </div>
        <div class="list">
          <table>
            <thead><tr><th>Name</th><th></th></tr></thead>
            <tbody>
              <tr>
                <td><div class="name-cell">{@render icon('baseline')}<i class="flag"></i><span>BL - ALINEAMIENTO</span></div></td>
                <td>ALINEAMIENTO</td>
              </tr>
              <tr class="yellow"><td></td><td></td></tr>
              <tr class="yellow"><td></td><td></td></tr>
              <tr class="green"><td></td><td></td></tr>
              <tr class="green"><td></td><td></td></tr>
              <tr class="green"><td></td><td></td></tr>
            </tbody>
          </table>
          <div class="scroll"><span class="chev"></span></div>
        </div>
      </aside>

      <section class="center">
        <div class="work">
          <div class="canvas">
            <svg viewBox="255 223 1022 630" preserveAspectRatio="xMaxYMin meet" role="img" aria-label="Profile view">
              <path d="M1157 290a45 45 0 0190 0" fill="none" stroke="#2e2e2e" stroke-width="11" />
              <rect x="1180" y="273" width="45" height="40" fill="#a8a8a8" />
              <text class="north" x="1203" y="253" text-anchor="middle">N</text>
              <g stroke="#a2a2a2" stroke-width="1.3">
                {#each cols as x}<path d="M{x} 328V721" />{/each}
                {#each rows as y}<path d="M700 {y}H1277" />{/each}
                {#each ticks as x}<path d="M{x} 721v12" />{/each}
              </g>
              <path d="M700 328H1277" stroke="#2c2c96" stroke-width="2" />
              <path d="M700 734.5H1277" stroke="#1c1cb0" stroke-width="1.5" />
              <path d="M1272 330V734" stroke="#b34242" stroke-width="1.5" />
              <text class="cad" transform="translate(1268 424) rotate(-90)">OFF: 0</text>
              <text class="cad" transform="translate(749 464) rotate(-90)">-V.100.00</text>
              <path d="M1276.5 367v10M1276.5 400v60" stroke="#0da00d" />
              <rect x="1179" y="374" width="47" height="16" rx="3" fill="#aaaab4" fill-opacity=".75" />
              <text class="wcs" x="1183" y="385">WCS</text>
              <path d="M1214 381h8" stroke="#888" stroke-width="2" />
              <rect x="1241" y="416" width="32" height="211" rx="3" fill="#8a8a8a" fill-opacity=".55" />
              <g fill="none" stroke="#3c3c3c" stroke-width="1.3">
                <circle cx="1257" cy="447" r="8" /><circle cx="1257" cy="447" r="4" />
                <path d="M1251 495c-2-6-6-6-4-9l4 3v-10l3 7 1-8 2 8 2-7 1 8 4-3c0 6-3 7-4 12z" />
                <path d="M1247 506l12 12M1259 506l-12 12" /><circle cx="1262" cy="521" r="4" />
                <path d="M1256 545v20M1260 545v20M1246 556c6-5 18-5 20 0s-12 6-18 3M1246 585h6v7h-6zM1254 585h6v7h-6zM1262 585h6v7h-6zM1246 595h15v12h-15zM1251 598l5 3-5 3z" />
                <circle cx="1266" cy="621" r="4" />
              </g>
              <path d="M799 477L1200.5 426.5 1216.5 429.5 1277 468" fill="none" stroke="#eee" stroke-width="1.2" />
              <path d="M906 464L979 500.5 1012 502 1045 501 1127 581.5 1158 583.5 1191 582 1272 663.5 1277 664" fill="none" stroke="#1c62b8" stroke-width="1.3" />
              <path d="M978 500h2M1011 502h2M1044 501h2M1126 582h2M1157 583h2M1190 582h2" stroke="#7040d0" stroke-width="2" />
            </svg>
          </div>
          <div class="toolbar">
            <i class="dock"></i>
            {#each tools as t}
              {#if t === '-'}<hr />{:else}<button type="button" aria-label={t}>{@render icon(t)}</button>{/if}
            {/each}
            <i class="dock"></i>
            {#each ['tSelPt', 'tSheet', 'tSelHash'] as t}
              <button type="button" aria-label={t}>{@render icon(t)}</button>
            {/each}
          </div>
        </div>
        <div class="command">
          <div class="history"></div>
          <input type="text" aria-label="Command line" />
        </div>
      </section>

      <aside class="properties">
        <div class="side-tabs">
          <a href="#design" class="active" aria-label="Design"></a>
          <a href="#display">Display</a>
          <a href="#extended">Extended Data</a>
          <a href="#object">Object Class</a>
        </div>
        <div class="props">
          <h2><i class="grip"></i>PROPERTIES</h2>
          <div class="combo-row">
            <label class="combo">
              <select aria-label="Object type"><option>Assembly</option></select>
              <i class="caret"></i>
            </label>
            {@render icon('quick')}
            {@render icon('pick')}
          </div>
          <h3><i></i></h3>
          <table>
            <tbody>
              <tr><th></th><td>vereda&nbsp; y&nbsp; banq...</td></tr>
              <tr><th></th><td>{@render icon('table', 14)}</td></tr>
              <tr><th></th><td>Yes</td></tr>
            </tbody>
          </table>
          <h3>General<i></i></h3>
          <table>
            <tbody>
              {#each general as p}
                <tr>
                  <th>{p.name}</th>
                  <td class:muted={p.kind === 'muted'}>
                    {#if p.kind === 'swatch'}<i class="swatch"></i>{/if}
                    {#if p.kind === 'stroke'}<i class="stroke"></i>{/if}
                    {p.value}
                  </td>
                </tr>
              {/each}
            </tbody>
          </table>
          <h3>Data<i></i></h3>
          <table>
            <tbody><tr><th>Code Set Style</th><td>All Codes</td></tr></tbody>
          </table>
        </div>
      </aside>
    </main>

    <footer>
      <a href="#model" class="layout active">Model</a>
      <a href="#layout1" class="layout">Layout1</a>
      <a href="#layout2" class="layout" aria-label="Layout2"></a>
      <div class="status">
        {#each status as s}
          <button type="button" class:on={s.on} style:width="{s.w}px" aria-label={s.title}>
            {#if s.icon}<span>{@render icon(s.icon)}</span>{:else if s.drop}<i class="caret"></i>{:else}{s.text}{/if}
          </button>
        {/each}
      </div>
    </footer>
  </div>

  <div class="shortcuts">
    <span>WinZip</span><span>SSFB</span><span>Econonica 12 Abrl</span><span>EraseParcela</span>
  </div>

  <div class="dialog corridor" role="dialog" aria-label="Corridor Properties">
    <div class="caption inactive">
      {@render logo(14)}<span>Corridor Properties - corredor vereda</span>
      {@render close()}
    </div>
    <div class="page-tabs">
      <a href="#information">Information</a>
      <a href="#parameters" class="active">Parameters</a>
      <a href="#codes">Codes</a>
      <a href="#feature">Feature Lines</a>
      <a href="#surfaces">Surfaces</a>
      <a href="#boundaries">Boundaries</a>
      <a href="#slope">Slope Patterns</a>
    </div>
    <div class="page">
      <div class="actions">
        <button class="btn square" type="button" aria-label="Expand">{@render icon('expand')}</button>
        <button class="btn square" type="button" aria-label="Collapse">{@render icon('collapse')}</button>
        <span class="btn square first"><input type="checkbox" checked aria-label="Select all" /></span>
        <span class="btn square"><input type="checkbox" aria-label="Select none" /></span>
        <button class="btn baseline" type="button">Add Baseline</button>
        <button class="btn freq" type="button">Set all Frequencies</button>
        <button class="btn targets" type="button">Set all Targets</button>
      </div>
      <div class="grid-box">
        <table class="data-table corridor-table">
          <colgroup><col class="c1" /><col class="c2" /><col class="c3" /><col class="c4" /></colgroup>
          <thead><tr><th>Name</th><th>Horizontal Bas...</th><th>Vertical Baseline</th><th>Assembly</th></tr></thead>
          <tbody>
            <tr>
              <td>
                <div class="name-cell">
                  {@render guide('top')}{@render icon('baseline')}<i class="flag"></i>
                  <label class="edit"><input type="checkbox" checked />BL - ALINEAMIENTO PRACT SUBENSAMB - (2)</label>
                </div>
              </td>
              <td class="white">ALINEAMIENTO...</td>
              <td class="white">perfil vereda</td>
              <td></td>
            </tr>
            <tr>
              <td>
                <div class="name-cell">
                  {@render guide('blank')}{@render guide('end')}{@render icon('assembly')}<i class="flag"></i>
                  <label class="edit"><input type="checkbox" checked />RG - vereda y banqueta - (2)</label>
                </div>
              </td>
              <td></td>
              <td></td>
              <td class="white">vereda y banq</td>
            </tr>
            <tr class="filler"><td></td><td></td><td></td><td></td></tr>
          </tbody>
        </table>
      </div>
      <div class="scroll"><span class="chev"></span></div>
      <div class="select-row">
        <button class="btn square" type="button" aria-label="Select region">{@render icon('select')}</button>
        Select region from drawing
      </div>
    </div>
  </div>

  <div class="dialog mapping" role="dialog" aria-label="Target Mapping">
    <div class="caption">
      {@render logo(14)}<span>Target Mapping</span>
      {@render close()}
    </div>
    <div class="form">
      <label for="corridor-name">Corridor name:</label>
      <input id="corridor-name" class="field focus" type="text" value="corredor vereda" bind:this={corridorInput} />
      <label for="assembly-name">Assembly name:</label>
      <div class="field-row">
        <input id="assembly-name" class="field" type="text" readonly value="vereda y banqueta" />
        <input class="field" type="text" readonly aria-label="Start station" />
        <input class="field" type="text" readonly aria-label="End station" />
      </div>
      <div class="grid-box target-box">
        <table class="data-table target-table">
          <colgroup><col class="c1" /><col class="c2" /><col class="c2" /><col class="c2" /><col class="c5" /></colgroup>
          <thead><tr><th>Target</th><th>Object Name</th><th>Subassembly</th><th>Assembly Group</th><th></th></tr></thead>
          <tbody>
            <tr>
              <td><div class="name-cell">{@render guide('top')}<span>Surfaces</span></div></td>
              <td class="white">&lt;Click here to set all&gt;</td><td class="white"></td><td class="white"></td><td></td>
            </tr>
            <tr>
              <td><div class="name-cell">{@render guide('line')}{@render guide('tee')}<span>Target Surface</span></div></td>
              <td class="white with-icon">{@render icon('target')}TERRENO</td><td class="white">BasicSideSlopeCutDitch</td><td class="white">Right</td><td></td>
            </tr>
            <tr>
              <td><div class="name-cell">{@render guide('line')}{@render guide('end')}<span>Daylight Surface</span></div></td>
              <td class="white with-icon">{@render icon('target')}TERRENO</td><td class="white">BasicBench</td><td class="white">Left</td><td></td>
            </tr>
            <tr class="selected">
              <td><div class="name-cell">{@render guide('tee')}<span>Width or Offset Targets</span></div></td>
              <td></td><td></td><td></td><td></td>
            </tr>
            <tr>
              <td><div class="name-cell">{@render guide('end')}<span>Slope or Elevation Targets</span></div></td>
              <td></td><td></td><td></td><td></td>
            </tr>
            <tr class="filler"><td></td><td></td><td></td><td></td><td></td></tr>
          </tbody>
        </table>
      </div>
      <div class="buttons">
        <button class="btn primary" type="button">OK</button>
        <button class="btn" type="button">Cancel</button>
        <button class="btn" type="button">Help</button>
      </div>
    </div>
    <svg class="size-grip" width="12" height="12" viewBox="0 0 12 12" aria-hidden="true"><path d="M0 12L12 0M4 12l8-8M8 12l4-4" stroke="#888" /></svg>
  </div>

  <i class="mark profile-mark"></i>
  <i class="mark target-mark"></i>

  <svg class="leader" width="260" height="70" viewBox="0 0 260 70" aria-hidden="true">
    <path d="M14 57L188 3" stroke="#12a88c" stroke-width="6" />
    <circle cx="14" cy="57" r="6" fill="#12a88c" />
  </svg>
  <div class="callout fixed">regenero el Corredor y se Arreglo</div>

  <svg class="leader second" width="140" height="50" viewBox="0 0 140 50" aria-hidden="true">
    <path d="M13 37L108 7" stroke="#12a88c" stroke-width="6" />
    <circle cx="13" cy="37" r="6" fill="#12a88c" />
  </svg>
  <div class="callout assign">asigna a todos los target<br />la superfie Terreno</div>
</div>

<style>
  :global(body) {
    margin: 0;
  }

  .desktop {
    position: relative;
    display: flex;
    flex-direction: column;
    min-height: 100vh;
    overflow: hidden;
    background: linear-gradient(90deg, #06a2f2 0, #07acf8 30%, #078ae0 58%, #0a3ab2 100%);
    font: 11px/16px 'Open Sans', 'Noto Sans', sans-serif;
    color: #111;
  }

  .desktop * {
    box-sizing: border-box;
  }

  button,
  input,
  select {
    margin: 0;
    padding: 0;
    border: 0;
    border-radius: 0;
    background: none;
    font: inherit;
    color: inherit;
    outline: none;
  }

  select {
    appearance: none;
  }

  a {
    color: inherit;
    text-decoration: none;
  }

  h2,
  h3 {
    margin: 0;
    font-size: 11px;
    font-weight: 400;
  }

  i {
    font-style: normal;
  }

  table {
    border-collapse: collapse;
    table-layout: fixed;
    width: 100%;
  }

  th {
    font-weight: 400;
    text-align: left;
  }

  td,
  th {
    padding: 0;
    white-space: nowrap;
    overflow: hidden;
  }

  svg {
    display: block;
    flex: none;
  }

  .caret {
    flex: none;
    display: block;
    width: 6px;
    height: 4px;
    background: #333;
    clip-path: polygon(0 0, 100% 0, 50% 100%);
  }

  .caret.pale {
    margin: 0 -5px 0 -2px;
    background: #777;
  }

  .edge-labels {
    position: absolute;
    inset: 126px auto auto 0;
    width: 5px;
    display: grid;
    grid-auto-rows: 85px;
    justify-items: end;
    overflow: hidden;
    color: #fff;
    text-shadow: 1px 1px 1px #000;
  }

  .app {
    position: relative;
    flex: 1;
    display: flex;
    flex-direction: column;
    margin-left: 5px;
    border-top: 2px solid #4a6a94;
    background: #f0f0f0;
  }

  /* title bar */
  .app-button {
    position: absolute;
    top: 6px;
    left: 0;
    width: 41px;
    height: 41px;
    display: grid;
    grid-template-columns: 31px 6px;
    grid-template-rows: 28px 9px;
    align-items: center;
    justify-items: center;
    border: 1px solid #222;
    background: linear-gradient(#e2e2e2, #8c8c8c);
    z-index: 1;
  }

  .app-button b {
    font-size: 8px;
    line-height: 8px;
    grid-column: 1 / 3;
  }

  .titlebar {
    display: flex;
    align-items: flex-start;
    height: 31px;
    padding: 6px 0 0 41px;
    background: #fff;
    border-bottom: 1px solid #222;
  }

  .quick,
  .info {
    display: flex;
    align-items: center;
    height: 24px;
    border: 1px solid #999;
    background: linear-gradient(#f6f6f6, #dedede);
  }

  .quick {
    width: 417px;
    padding-left: 7px;
    gap: 8px;
  }

  .workspace {
    flex: 1;
    height: 23px;
    display: flex;
    align-items: center;
    gap: 2px;
    padding: 0 4px 0 3px;
    border: 1px solid #777;
    background: linear-gradient(#eee, #d4d4d4);
    color: #111;
  }

  .workspace select {
    flex: 1;
    font-size: 12px;
  }

  .caret.more {
    width: 8px;
    margin-right: 4px;
  }

  .window-title {
    flex: 1;
    display: flex;
    justify-content: center;
    gap: 18px;
    color: #222;
    white-space: nowrap;
  }

  .info {
    width: 446px;
    padding-left: 3px;
  }

  .info button {
    margin-left: 8px;
  }

  .info button.account {
    margin-left: 7px;
  }

  .info .caret {
    margin-left: 8px;
    width: 5px;
  }

  .info input {
    width: 180px;
    height: 22px;
    margin-left: 4px;
    padding: 0 3px;
    border: 1px solid #111;
    background: #fff;
    font-style: italic;
  }

  .info input::placeholder {
    color: #666;
  }

  .account {
    display: flex;
    align-items: center;
    gap: 5px;
    width: 105px;
  }

  .account .caret {
    margin: 0 2px 0 auto;
  }

  .bar {
    width: 1px;
    height: 18px;
    margin-left: 10px;
    background: #bbb;
  }

  .play {
    width: 5px;
    height: 8px;
    background: #333;
    clip-path: polygon(0 0, 100% 50%, 0 100%);
  }

  .window-buttons {
    width: 136px;
    display: flex;
    gap: 35px;
    padding: 2px 0 0 44px;
  }

  .min {
    width: 10px;
    height: 6px;
    border-bottom: 1px solid #999;
  }

  .max {
    width: 10px;
    height: 10px;
    border: 1px solid #999;
  }

  /* menus and ribbon */
  .menubar {
    display: flex;
    flex-wrap: wrap;
    align-content: flex-start;
    row-gap: 1px;
    height: 41px;
    padding-left: 55px;
    line-height: 20px;
    background: linear-gradient(#adadad, #565656);
    color: #fff;
    overflow: hidden;
  }

  .menubar a,
  .tabs a {
    white-space: nowrap;
  }

  .mdi {
    display: flex;
    gap: 4px;
    height: 20px;
    align-items: center;
    margin-left: auto;
    margin-right: -5px;
  }

  .mdi i {
    width: 10px;
    height: 2px;
    background: #111;
  }

  .mdi i + i {
    height: 8px;
    border: 2px solid #111;
    background: none;
  }

  .express {
    width: 100%;
  }

  .tabs {
    display: flex;
    align-items: center;
    height: 22px;
    padding-left: 13px;
    border-bottom: 1px solid #64964a;
    background: #9f9f9f;
    white-space: nowrap;
    overflow: hidden;
  }

  .geo {
    width: 82px;
    line-height: 14px;
    border: 1px solid #2c6a9c;
    text-align: center;
  }

  .ribbon {
    height: 98px;
    border-bottom: 2px solid #eee;
    background: linear-gradient(#e9e9e9, #9c9c9c 85%, #6a9a50 96%, #64964a);
  }

  .panels {
    display: flex;
    flex-wrap: wrap;
    width: 777px;
    height: 95px;
    padding-left: 2px;
    background: linear-gradient(#fafafa, #fff);
    border-bottom: 1px solid #64964a;
    color: #aaa;
  }

  .panel {
    display: flex;
    height: 79px;
    border-right: 1px solid #c8c8c8;
  }

  .general {
    width: 113px;
    padding-left: 7px;
  }

  .sub {
    width: 326px;
    padding-left: 2px;
  }

  .asm {
    width: 189px;
    padding-left: 7px;
  }

  .asm .caret {
    align-self: flex-end;
    margin: 0 4px 20px -4px;
    background: #777;
  }

  .create {
    width: 147px;
    border: 0;
  }

  .stack {
    display: flex;
    flex-direction: column;
    padding-top: 2px;
  }

  .small {
    display: flex;
    align-items: center;
    gap: 5px;
    height: 24px;
    padding-right: 8px;
    white-space: nowrap;
  }

  .large {
    display: block;
    align-self: flex-start;
    width: 76px;
    line-height: 15px;
    text-align: center;
  }

  .asm .large {
    width: 66px;
  }

  .create .large {
    width: 58px;
  }

  .large svg {
    margin: 5px auto 2px;
  }

  .sub .stack {
    padding-left: 5px;
  }

  .sub .stack + .stack {
    padding-left: 2px;
  }

  .asm .stack {
    padding-left: 4px;
  }

  .create .stack {
    padding-left: 2px;
  }

  .panel-title {
    width: 100%;
    height: 15px;
    padding-left: 14px;
    line-height: 15px;
    background: #ececec;
    color: #222;
  }

  .file-tabs {
    display: flex;
    height: 29px;
    padding-left: 12px;
    border-bottom: 4px solid #f0f0f0;
    background: #b2b2b2;
  }

  .file-tabs a {
    width: 100px;
    margin-top: 3px;
    padding-left: 20px;
    line-height: 22px;
    background: linear-gradient(#ddd, #c4c4c4);
    clip-path: polygon(14px 0, 100% 0, 100% 100%, 0 100%);
    color: #666;
  }

  main {
    flex: 1;
    display: flex;
  }

  /* toolspace */
  .toolspace {
    width: 250px;
    display: flex;
    flex-direction: column;
    white-space: nowrap;
    padding-bottom: 5px;
  }

  h2 {
    display: flex;
    align-items: center;
    gap: 6px;
    height: 22px;
    background: #e6e6e6;
  }

  .grip {
    width: 3px;
    height: 12px;
    background: repeating-linear-gradient(#999 0 1px, transparent 1px 3px);
  }

  .toolspace h2 {
    padding-left: 6px;
  }

  .tool-row {
    padding: 7px 5px;
  }

  .view {
    height: 21px;
    padding-left: 3px;
    border: 1px solid #999;
    background: #ddd;
  }

  .tree {
    flex: 1;
    margin-top: 2px;
    padding: 1px 0 0 4px;
    border: 1px solid #777;
    background: #fff;
  }

  .tree-row {
    display: flex;
    align-items: center;
    height: 20px;
  }

  .tree-row span {
    padding-left: 9px;
  }

  .tree-row.bold {
    font-weight: 700;
  }

  .list {
    margin-top: 8px;
    padding-bottom: 2px;
    border: 1px solid #777;
    background: #fff;
  }

  .list th {
    height: 24px;
    padding-left: 7px;
  }

  .list th:first-child {
    width: 99px;
  }

  .list td {
    height: 20px;
    border-top: 1px solid #7f96b4;
    border-bottom: 1px solid #7f96b4;
    padding-left: 3px;
  }

  .list td:first-child {
    border-right: 1px solid #f3bcbc;
    padding: 0 5px 0 1px;
  }

  .yellow td {
    background: #fffeea;
  }

  .green td {
    background: #d9fcd9;
  }

  .name-cell {
    display: flex;
    align-items: center;
    overflow: hidden;
  }

  .list .name-cell span {
    padding-left: 10px;
  }

  .flag {
    flex: none;
    align-self: flex-start;
    width: 7px;
    height: 7px;
    margin: 1px 1px 0 1px;
    background: #f0b820;
    border-top: 1px solid #333;
    border-left: 1px solid #333;
    clip-path: polygon(0 0, 100% 0, 0 100%);
  }

  .scroll {
    display: flex;
    align-items: center;
    height: 16px;
    background: linear-gradient(90deg, #f0f0f0 17px, #cdcdcd 17px);
  }

  .list .scroll {
    margin-top: 5px;
  }

  .chev {
    width: 6px;
    height: 6px;
    margin-left: 7px;
    border-left: 2px solid #555;
    border-bottom: 2px solid #555;
    rotate: 45deg;
  }

  /* drawing area */
  .center {
    flex: 1;
    display: flex;
    flex-direction: column;
    min-width: 0;
  }

  .work {
    flex: 1;
    display: flex;
    gap: 4px;
  }

  .canvas {
    flex: 1;
    min-width: 0;
    background: #000;
  }

  .canvas svg {
    width: 100%;
  }

  .north {
    font: 700 18px 'Liberation Sans', sans-serif;
    fill: #aaa;
  }

  .cad {
    font: 21px 'DejaVu Sans', sans-serif;
    font-weight: 200;
    fill: #14c814;
  }

  .wcs {
    font: 11px 'Liberation Sans', sans-serif;
    fill: #555;
  }

  .toolbar {
    width: 25px;
    margin-right: 5px;
    border: 1px solid #666;
    border-width: 0 1px;
    display: flex;
    flex-direction: column;
  }

  .toolbar button {
    display: grid;
    place-items: center;
    height: 22px;
  }

  .toolbar hr {
    width: 17px;
    height: 1px;
    margin: 3px auto;
    border: 0;
    background: #999;
  }

  .dock {
    height: 8px;
    border: 2px solid #9a9aa0;
    background: repeating-linear-gradient(90deg, #fff 0 1px, #8c8c94 1px 2px);
  }

  .command {
    margin: 2px 0 0;
    border: 1px solid #777;
  }

  .history {
    height: 67px;
    background: #c8c8c8;
    border-bottom: 1px solid #777;
  }

  .command input {
    display: block;
    width: 100%;
    height: 22px;
    background: #fff;
  }

  /* properties palette */
  .properties {
    display: flex;
    width: 246px;
    overflow: hidden;
  }

  .side-tabs {
    flex: none;
    width: 21px;
    padding-top: 24px;
  }

  .side-tabs a {
    display: flex;
    align-items: center;
    justify-content: center;
    width: 100%;
    height: 121px;
    line-height: 19px;
    writing-mode: vertical-rl;
    rotate: 180deg;
    border: 1px solid #999;
    border-radius: 0 5px 5px 0;
    background: #e2e2e2;
    color: #555;
    font-size: 12px;
  }

  .side-tabs a.active {
    border-left: 0;
    background: #f0f0f0;
  }

  .props {
    flex: 1;
    min-width: 0;
  }

  .props h2 {
    gap: 5px;
    padding-left: 5px;
    margin-left: 2px;
  }

  .combo-row {
    display: flex;
    align-items: center;
    gap: 9px;
    padding: 12px 0 7px 5px;
  }

  .combo {
    display: flex;
    align-items: center;
    width: 163px;
    height: 24px;
    padding-right: 4px;
    border: 1px solid #999;
    background: linear-gradient(90deg, #fff 148px, #999 148px, #999 149px, #fff 149px);
  }

  .combo select {
    flex: 1;
    padding-left: 3px;
  }

  .combo .caret {
    background: #888;
  }

  .props h3 {
    display: flex;
    align-items: center;
    justify-content: space-between;
    height: 19px;
    margin-left: 10px;
    padding-left: 6px;
    border: 1px solid #999;
    border-right: 0;
    background: #dcdcdc;
    font-weight: 700;
  }

  .props h3 i {
    width: 5px;
    height: 1px;
    background: #333;
  }

  .props table {
    width: 197px;
    margin: 0 0 3px 28px;
  }

  .props th,
  .props td {
    height: 19px;
    border: 1px solid #e2e2e2;
    padding: 0 0 0 5px;
  }

  .props th {
    width: 112px;
  }

  .props td {
    padding-left: 2px;
  }

  .muted {
    color: #8a8a8a;
  }

  .swatch {
    display: inline-block;
    width: 10px;
    height: 10px;
    margin: 0 4px 0 1px;
    border: 1px solid #111;
    border-radius: 2px;
    background: #f8b808;
    vertical-align: -1px;
  }

  .stroke {
    display: inline-block;
    width: 38px;
    height: 1px;
    margin: 0 2px;
    background: #111;
    vertical-align: 4px;
  }

  /* footer */
  footer {
    display: flex;
    align-items: flex-start;
    height: 29px;
    padding-left: 9px;
    background: #b0b0b0;
    border-bottom: 1px solid #888;
  }

  .layout {
    width: 62px;
    height: 18px;
    line-height: 18px;
    text-align: center;
    color: #777;
    background: #dedede;
    clip-path: polygon(0 0, 100% 0, calc(100% - 6px) 100%, 6px 100%);
  }

  .layout.active {
    color: #111;
    background: #fff;
    font-weight: 700;
  }

  .status {
    display: flex;
    height: 28px;
    margin-left: auto;
    background: #ebebeb;
  }

  .status button {
    display: grid;
    place-items: center;
    font-size: 12px;
    white-space: nowrap;
  }

  .status .on span {
    padding: 2px;
    border: 1px solid #4c84bc;
    background: #cce4fa;
  }

  .shortcuts {
    display: grid;
    grid-template-columns: repeat(4, 76px);
    height: 31px;
    padding-top: 1px;
    margin-left: -8px;
    line-height: 15px;
    text-align: center;
    color: #fff;
    text-shadow: 1px 1px 2px #000;
  }

  /* dialogs */
  .dialog {
    position: absolute;
    border: 1px solid #777;
    background: #f0f0f0;
    box-shadow: 0 2px 12px rgba(0, 0, 0, 0.45);
    overflow: hidden;
  }

  .corridor {
    left: 86px;
    top: 169px;
    width: 658px;
    height: 636px;
  }

  .mapping {
    left: 149px;
    top: 458px;
    width: 651px;
    height: 520px;
    border-color: #333;
  }

  .caption {
    display: flex;
    align-items: center;
    gap: 6px;
    height: 30px;
    padding: 0 9px;
    background: #fff;
  }

  .caption.inactive {
    color: #8c8c8c;
  }

  .caption button {
    margin-left: auto;
  }

  .page-tabs {
    display: grid;
    grid-template-columns: 68px 70px 40px 77px 54px 65px 82px;
    align-items: end;
    height: 28px;
    padding-left: 6px;
    white-space: nowrap;
  }

  .page-tabs a {
    height: 19px;
    padding-left: 3px;
    line-height: 16px;
    border-right: 2px solid #888;
    border-top: 1px solid #fff;
  }

  .page-tabs a:first-child {
    border-right-color: #ddd;
  }

  .page-tabs a.active {
    height: 21px;
    line-height: 18px;
    background: #fafafa;
  }

  .page {
    width: 645px;
    height: 535px;
    margin-left: 6px;
    padding: 16px 4px 0 15px;
    border: 2px solid #888;
    border-width: 0 2px 2px 0;
    background: #f9f9f9;
  }

  .btn {
    height: 22px;
    border: 1px solid #adadad;
    background: #e1e1e1;
    text-align: center;
  }

  .actions {
    display: flex;
    gap: 2px;
  }

  .square {
    width: 22px;
    display: grid;
    place-items: center;
  }

  .square.first {
    margin-left: 6px;
  }

  .baseline {
    width: 142px;
    margin-left: 3px;
  }

  .freq {
    flex: 1;
    margin-left: 7px;
  }

  .targets {
    width: 186px;
    margin-left: 5px;
  }

  input[type='checkbox'] {
    appearance: none;
    flex: none;
    display: grid;
    place-items: center;
    width: 13px;
    height: 13px;
    border: 1px solid #1c4a7c;
    background: #fff;
  }

  input[type='checkbox']:checked::after {
    content: '';
    width: 4px;
    height: 7px;
    margin-bottom: 2px;
    border: solid #1f9a2c;
    border-width: 0 2px 2px 0;
    rotate: 40deg;
  }

  .grid-box {
    border: 1px solid #828790;
    background: #feffe9;
    overflow: hidden;
  }

  .page .grid-box {
    height: 424px;
    margin-top: 10px;
  }

  .data-table {
    height: 100%;
    border-collapse: separate;
    border-spacing: 0;
  }

  .data-table th {
    height: 22px;
    padding-left: 6px;
    background: #fff;
    border-right: 1px solid #e0e0e0;
    border-bottom: 2px solid #828790;
  }

  .data-table td {
    height: 20px;
    padding-left: 3px;
    border-right: 1px solid #f3b4b4;
  }

  .data-table th:last-child,
  .data-table td:last-child {
    border-right: 0;
  }

  .data-table td:first-child {
    padding-left: 5px;
  }

  .corridor-table td:first-child {
    padding-left: 6px;
  }

  .data-table td.white {
    background: #fff;
    border-bottom: 1px solid #7f96b4;
  }

  .data-table .filler td {
    height: auto;
  }

  .corridor-table .c1 {
    width: 348px;
  }

  .corridor-table .c2 {
    width: 101px;
  }

  .corridor-table .c3 {
    width: 111px;
  }

  .edit {
    flex: 1;
    display: flex;
    align-items: center;
    gap: 5px;
    height: 20px;
    margin-left: 7px;
    padding-left: 9px;
    border-bottom: 1px solid #7f96b4;
    background: #fff;
  }

  .select-row {
    display: flex;
    align-items: center;
    gap: 6px;
    margin-top: 8px;
    white-space: nowrap;
  }

  .form {
    display: flex;
    flex-direction: column;
    padding: 9px 13px 0 12px;
  }

  .form label {
    line-height: 16px;
  }

  .field {
    height: 20px;
    padding: 0 4px;
    border: 1px solid #7a7a7a;
    background: #f0f0f0;
    min-width: 0;
  }

  .field.focus {
    width: 318px;
    margin: 1px 0 8px;
    border-color: #2476c8;
  }

  .field::selection {
    background: #0078d7;
    color: #fff;
  }

  .field-row {
    display: grid;
    grid-template-columns: 306px 150px 145px;
    column-gap: 12px;
    margin: 2px 0 12px;
  }

  .field-row .field:last-child {
    margin-left: -6px;
  }

  .target-box {
    height: 336px;
  }

  .target-table .c1 {
    width: 199px;
  }

  .target-table .c2 {
    width: 140px;
  }

  .target-table .name-cell span {
    padding-left: 6px;
  }

  .target-table th:nth-child(n + 2) {
    padding-left: 7px;
  }

  .selected td {
    background: #9f9f9f;
  }

  .data-table .selected td:first-child {
    background: linear-gradient(90deg, #feffe9 27px, #9f9f9f 27px);
  }

  .with-icon .icon {
    float: left;
    margin-left: -3px;
    margin-right: 3px;
  }

  .buttons {
    display: flex;
    justify-content: flex-end;
    gap: 8px;
    margin-top: 16px;
  }

  .buttons .btn {
    width: 76px;
  }

  .btn.primary {
    border: 2px solid #0078d7;
  }

  .size-grip {
    position: absolute;
    right: 0;
    bottom: 0;
  }

  /* annotations */
  .mark {
    position: absolute;
    border: 3px solid #e04848;
  }

  .profile-mark {
    left: 856px;
    top: 424px;
    width: 297px;
    height: 165px;
  }

  .target-mark {
    left: 345px;
    top: 613px;
    width: 157px;
    height: 24px;
    box-shadow: 1px 3px 5px rgba(0, 0, 0, 0.4);
  }

  .leader {
    position: absolute;
    left: 971px;
    top: 358px;
  }

  .leader.second {
    left: 361px;
    top: 567px;
    filter: drop-shadow(2px 4px 3px rgba(0, 0, 0, 0.4));
  }

  .callout {
    position: absolute;
    display: grid;
    place-items: center;
    border: 6px solid #12a88c;
    border-radius: 5px;
    background: #fff;
    box-shadow: 2px 4px 6px rgba(0, 0, 0, 0.5);
    color: #111;
    font: 19px/22px 'Liberation Sans', sans-serif;
    text-align: center;
    white-space: nowrap;
  }

  .callout.fixed {
    left: 1130px;
    top: 282px;
    width: 318px;
    height: 83px;
  }

  .callout.assign {
    left: 467px;
    top: 499px;
    width: 230px;
    height: 79px;
  }
</style>
